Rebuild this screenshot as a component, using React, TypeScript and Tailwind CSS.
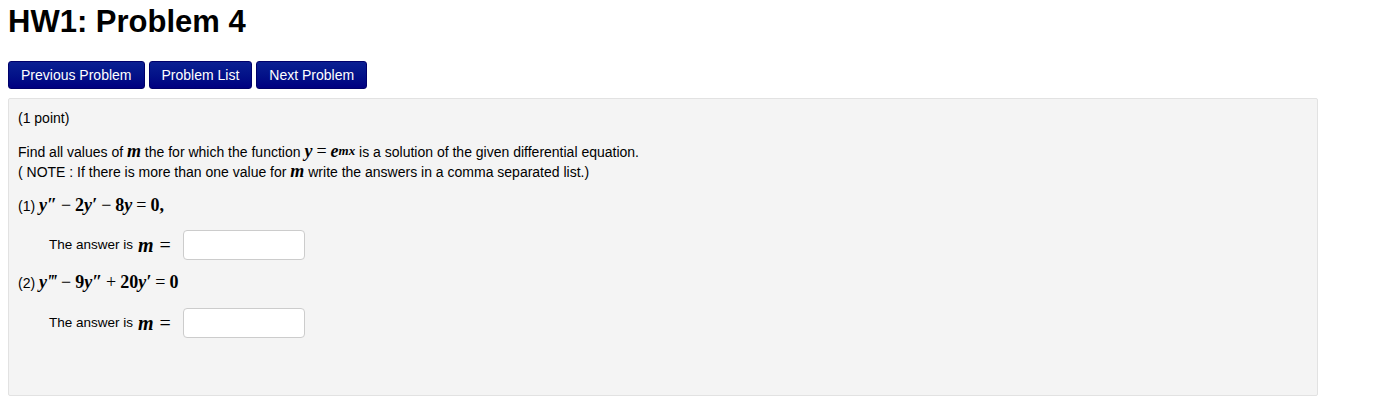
function V({ children }: { children: React.ReactNode }) {
  return <i className="font-['Liberation_Serif',serif] text-[18px] leading-none font-bold italic">{children}</i>;
}

function N({ children }: { children: React.ReactNode }) {
  return <span className="font-['Liberation_Serif',serif] text-[18px] leading-none font-bold">{children}</span>;
}

function Op({ children }: { children: React.ReactNode }) {
  return <span className="font-['Liberation_Serif',serif] text-[18px] leading-none mx-[4px]">{children}</span>;
}

function AnswerRow() {
  return (
    <div className="flex items-center h-[30px] pl-[31px] text-[13.5px]">
      <span className="mr-[5px]">The answer is</span>
      <i className="font-['Liberation_Serif',serif] text-[20px] leading-none font-bold italic">m</i>
      <span className="font-['Liberation_Serif',serif] text-[20px] leading-none mx-[6px]">=</span>
      <input
        type="text"
        className="ml-[6px] w-[122px] h-[30px] bg-white border border-[#cccccc] rounded-[4px] outline-none"
      />
    </div>
  );
}

const btn =
  "h-[28px] px-[12px] text-[14px] text-white rounded-[3px] border border-[#00006a] bg-gradient-to-b from-[#0b1f92] to-[#000080]";

export default function App() {
  return (
    <div className="bg-white min-h-[412px] font-['Liberation_Sans',Arial,sans-serif] text-black">
      <div className="px-[8px]">
        <h1 className="text-[31px] font-bold leading-[36px] pt-[4px]">HW1: Problem 4</h1>

        <div className="flex gap-[4px] mt-[21px]">
          <button className={btn}>Previous Problem</button>
          <button className={btn}>Problem List</button>
          <button className={btn}>Next Problem</button>
        </div>

        <div className="mt-[9px] w-[1310px] h-[298px] bg-[#f4f4f4] border border-[#e2e2e2] rounded-[2px] pt-[10px] px-[9px] text-[14px]">
          <p className="leading-[18px]">(1 point)</p>

          <p className="mt-[15px] leading-[20px]">
            Find all values of <V>m</V> the for which the function <V>y</V>
            <Op>=</Op>
            <V>e</V>
            <sup className="font-['Liberation_Serif',serif] text-[13px] leading-none font-bold italic relative -top-[2px]">
              mx
            </sup>{" "}
            is a solution of the given differential equation.
          </p>
          <p className="leading-[20px]">
            ( NOTE : If there is more than one value for <V>m</V> write the answers in a comma separated list.)
          </p>

          <p className="mt-[14px] leading-[20px]">
            (1) <V>y″</V>
            <Op>−</Op>
            <N>2</N>
            <V>y′</V>
            <Op>−</Op>
            <N>8</N>
            <V>y</V>
            <Op>=</Op>
            <N>0,</N>
          </p>

          <div className="mt-[14px]">
            <AnswerRow />
          </div>

          <p className="mt-[13px] leading-[20px]">
            (2) <V>y‴</V>
            <Op>−</Op>
            <N>9</N>
            <V>y″</V>
            <Op>+</Op>
            <N>20</N>
            <V>y′</V>
            <Op>=</Op>
            <N>0</N>
          </p>

          <div className="mt-[15px]">
            <AnswerRow />
          </div>
        </div>
      </div>
    </div>
  );
}
